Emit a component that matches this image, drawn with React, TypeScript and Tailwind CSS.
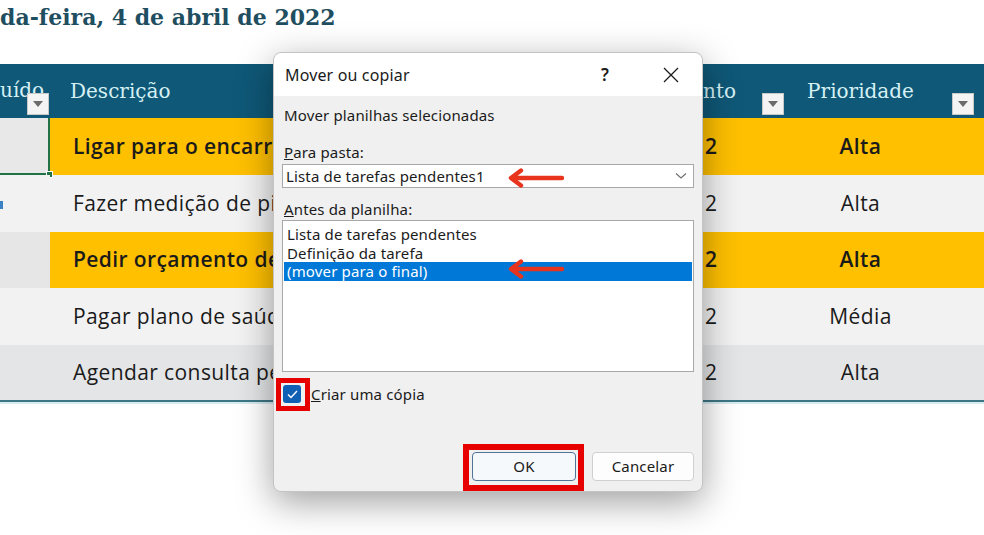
import React from 'react';

type Row = {
  desc: string;
  date: string;
  prio: string;
  bold: boolean;
  bg: string;
  first: string;
  h: string;
};

const rows: Row[] = [
  { desc: 'Ligar para o encarregado da obra', date: '04/04/2022', prio: 'Alta', bold: true, bg: 'bg-[#ffc000]', first: 'bg-[#e8e8e8]', h: 'h-[57px]' },
  { desc: 'Fazer medição de piso da sala', date: '04/04/2022', prio: 'Alta', bold: false, bg: 'bg-[#f2f2f2]', first: 'bg-[#f2f2f2]', h: 'h-[57px]' },
  { desc: 'Pedir orçamento de materiais', date: '04/04/2022', prio: 'Alta', bold: true, bg: 'bg-[#ffc000]', first: 'bg-[#e6e6e6]', h: 'h-[56px]' },
  { desc: 'Pagar plano de saúde', date: '04/04/2022', prio: 'Média', bold: false, bg: 'bg-[#f2f2f2]', first: 'bg-[#f2f2f2]', h: 'h-[57px]' },
  { desc: 'Agendar consulta pediatra', date: '04/04/2022', prio: 'Alta', bold: false, bg: 'bg-[#e4e5e6]', first: 'bg-[#e4e5e6]', h: 'h-[55px]' },
];

const FilterButton = ({ className }: { className: string }) => (
  <div className={`absolute bottom-[3px] w-[22px] h-[22px] bg-[#f4f4f4] border border-[#c9c9c9] flex items-center justify-center ${className}`}>
    <svg width="10" height="6" viewBox="0 0 10 6">
      <path d="M0 0 L10 0 L5 6 Z" fill="#6b6b6b" />
    </svg>
  </div>
);

const RedArrow = ({ className }: { className: string }) => (
  <svg className={`absolute ${className}`} width="58" height="20" viewBox="0 0 58 20">
    <path d="M55 10 L6 10 M14 2.5 L4 10 L14 17.5" stroke="#e8341d" strokeWidth="4.4" fill="none" strokeLinecap="round" strokeLinejoin="round" />
  </svg>
);

const App: React.FC = () => {
  return (
    <div className="relative w-[984px] h-[535px] overflow-hidden bg-white">
      {/* Planilha ao fundo */}
      <div className="flex flex-col">
        <div className="h-[64px] pt-[3px]">
          <h1 className="text-[22px] font-bold leading-[28px] text-[#1f4e61] whitespace-nowrap" style={{ fontFamily: '"DejaVu Serif", serif' }}>
            da-feira, 4 de abril de 2022
          </h1>
        </div>

        <div className="grid grid-cols-[50px_570px_165px_199px] h-[54px] bg-[#0f5877] text-[#d6f1f5] text-[20px]" style={{ fontFamily: '"DejaVu Serif", serif' }}>
          <div className="relative flex items-center">
            <span className="-mt-[3px]">uído</span>
            <FilterButton className="left-[27px]" />
          </div>
          <div className="flex items-center pl-[20px]">Descrição</div>
          <div className="relative flex items-center justify-end pr-[49px]">
            Vencimento
            <FilterButton className="right-[1px]" />
          </div>
          <div className="relative flex items-center justify-center pr-[48px]">
            Prioridade
            <FilterButton className="right-[10px]" />
          </div>
        </div>

        {rows.map((r, i) => (
          <div
            key={i}
            className={`grid grid-cols-[50px_570px_165px_199px] ${r.h} text-[21px] tracking-[0.4px] text-[#1a1a1a] ${r.bold ? 'font-semibold' : ''}`}
            style={{ fontFamily: '"Open Sans", sans-serif' }}
          >
            <div className={`relative ${r.first} ${i === 0 ? 'border-r-2 border-b-2 border-[#217346]' : ''}`}>
              {i === 0 && <div className="absolute -right-[5px] -bottom-[5px] w-[7px] h-[7px] bg-[#217346] border border-white" />}
              {i === 1 && <div className="absolute left-0 top-[26px] w-[3px] h-[8px] bg-[#3b82c4]" />}
            </div>
            <div className={`${r.bg} flex items-center pl-[23px] whitespace-nowrap overflow-hidden`}>{r.desc}</div>
            <div className={`${r.bg} flex items-center justify-end pr-[64px] whitespace-nowrap tracking-[4px]`}>{r.date}</div>
            <div className={`${r.bg} flex items-center justify-center pr-[48px]`}>{r.prio}</div>
          </div>
        ))}
        <div className="h-[2px] bg-[#3d7786]" />
        <div className="h-[2px] bg-[#d8ebef]" />
      </div>

      {/* Caixa de diálogo Mover ou copiar */}
      <div
        className="absolute left-[273px] top-[52px] w-[430px] h-[440px] rounded-[8px] bg-[#f0f0f0] border border-[#c4c4c4] shadow-[0_10px_36px_rgba(0,0,0,0.38)] flex flex-col text-[15px] tracking-[0.15px] text-[#1b1b1b]"
        style={{ fontFamily: '"Noto Sans", sans-serif' }}
      >
        <div className="h-[43px] bg-white rounded-t-[8px] flex items-center pl-[11px] shrink-0">
          <span className="text-[16px]">Mover ou copiar</span>
          <span className="ml-auto mr-[54px] text-[17px] font-semibold">?</span>
          <svg className="mr-[23px]" width="16" height="16" viewBox="0 0 16 16">
            <path d="M1 1 L15 15 M15 1 L1 15" stroke="#1b1b1b" strokeWidth="1.3" />
          </svg>
        </div>

        <div className="flex flex-col px-[8px] pt-[9px] flex-1">
          <div className="leading-[20px] pl-[2px]">Mover planilhas selecionadas</div>
          <div className="leading-[20px] pl-[2px] mt-[17px] first-letter:underline">Para pasta:</div>
          <div className="mt-[2px] h-[24px] bg-white border border-[#a8a8a8] flex items-center pl-[3px]">
            <span>Lista de tarefas pendentes1</span>
            <svg className="ml-auto mr-[6px]" width="12" height="8" viewBox="0 0 12 8">
              <path d="M1 1.5 L6 6 L11 1.5" stroke="#6e6e6e" strokeWidth="1.1" fill="none" />
            </svg>
          </div>
          <div className="leading-[20px] pl-[2px] mt-[11px] first-letter:underline">Antes da planilha:</div>
          <div className="mt-[1px] h-[152px] bg-white border border-[#a8a8a8] flex flex-col pt-[4px] px-[1px] leading-[18.5px]">
            <div className="pl-[3px]">Lista de tarefas pendentes</div>
            <div className="pl-[3px]">Definição da tarefa</div>
            <div className="pl-[3px] bg-[#0078d7] text-white">(mover para o final)</div>
          </div>
          <div className="flex items-center mt-[11px] pl-[1px]">
            <div className="w-[18px] h-[18px] rounded-[3px] bg-[#0f5fb5] flex items-center justify-center shrink-0">
              <svg width="11" height="9" viewBox="0 0 11 9">
                <path d="M1 4.5 L4 7.5 L10 1" stroke="white" strokeWidth="1.4" fill="none" />
              </svg>
            </div>
            <span className="ml-[10px] first-letter:underline">Criar uma cópia</span>
          </div>
          <div className="mt-auto mb-[10px] flex justify-end gap-[16px]">
            <button className="w-[104px] h-[29px] rounded-[4px] bg-[#f6f9fc] border border-[#4f7496] text-[15px]">OK</button>
            <button className="w-[102px] h-[29px] rounded-[4px] bg-[#fdfdfd] border border-[#d0d0d0] text-[15px]">Cancelar</button>
          </div>
        </div>

        {/* Marcações vermelhas */}
        <RedArrow className="left-[233px] top-[115px]" />
        <RedArrow className="left-[233px] top-[206px]" />
        <div className="absolute left-[2px] top-[325px] w-[34px] h-[33px] border-[5px] border-[#e60000]" />
        <div className="absolute left-[189px] top-[391px] w-[121px] h-[47px] border-[6px] border-[#e60000]" />
      </div>
    </div>
  );
};

export default App;
